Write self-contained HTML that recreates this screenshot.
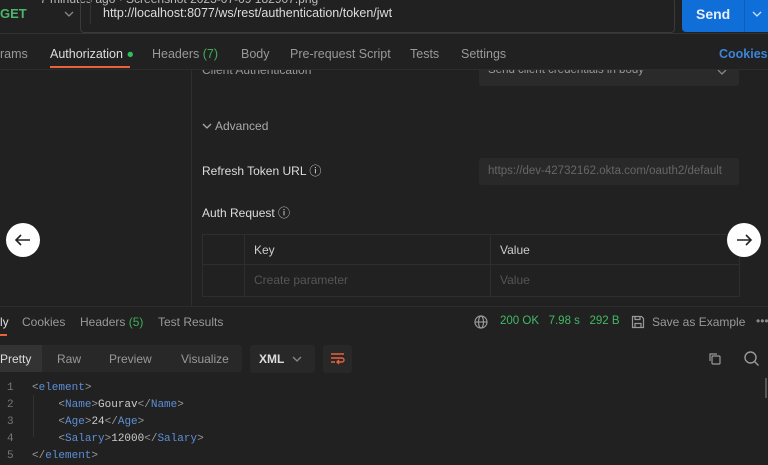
<!DOCTYPE html><html><head><style>
body{margin:0;width:768px;height:465px;background:#212121;font-family:"Liberation Sans",sans-serif;color:#ccc;position:relative;overflow:hidden;font-size:12px}
.a{position:absolute;white-space:nowrap}
.m{font-family:"Liberation Mono",monospace;font-size:11px}
.t{color:#5d8fd6}.p{color:#999}
</style></head><body>
<div class="a" style="left:40px;top:-8px;font-size:12px;color:#bbb">7 minutes ago · Screenshot 2023-07-09 182907.png</div>
<div class="a" style="left:0;top:6px;color:#4cb56a;font-weight:bold;font-size:13px">GET</div>
<svg class="a" style="left:64px;top:10px" width="10" height="8"><path d="M1 2l4 4 4-4" stroke="#888" fill="none" stroke-width="1.3"/></svg>
<div class="a" style="left:80px;top:-2px;width:593px;height:33px;border:1px solid #3a3a3a;border-radius:4px"></div>
<div class="a" style="left:90px;top:0;width:1px;height:24px;background:#333"></div>
<div class="a" style="left:103px;top:6px;color:#ddd;font-size:12.5px">http://localhost:8077/ws/rest/authentication/token/jwt</div>
<div class="a" style="left:682px;top:-3px;width:90px;height:35px;background:#0f6ed8;border-radius:4px"></div>
<div class="a" style="left:744px;top:0;width:1px;height:32px;background:#0a5fbf"></div>
<div class="a" style="left:696px;top:6px;color:#e6eefa;font-weight:bold;font-size:14px">Send</div>
<svg class="a" style="left:752px;top:10px" width="10" height="8"><path d="M1 2l4 4 4-4" stroke="#cfe0f7" fill="none" stroke-width="1.3"/></svg>
<div class="a" style="left:0;top:33px;width:768px;height:1px;background:#333"></div>
<div class="a" style="left:0;top:70px;width:768px;height:236px;overflow:hidden">
 <div class="a" style="left:191px;top:0;width:1px;height:236px;background:#2e2e2e"></div>
 <div class="a" style="left:479px;top:-8px;width:260px;height:24px;background:#2a2a2a;border-radius:3px"></div>
 <div class="a" style="left:488px;top:-6px;font-size:11.5px;color:#999">Send client credentials in body</div>
 <svg class="a" style="left:717px;top:-2px" width="10" height="8"><path d="M1 2l4 4 4-4" stroke="#888" fill="none" stroke-width="1.3"/></svg>
 <div class="a" style="left:202px;top:-7px;font-size:12px;color:#999">Client Authentication</div>
 <svg class="a" style="left:202px;top:52px" width="10" height="8"><path d="M1 2l4 4 4-4" stroke="#aaa" fill="none" stroke-width="1.3"/></svg>
 <div class="a" style="left:215px;top:49px;font-size:12px;color:#aaa">Advanced</div>
 <div class="a" style="left:202px;top:92px;font-size:12px;color:#ddd">Refresh Token URL ⓘ</div>
 <div class="a" style="left:479px;top:88px;width:260px;height:27px;background:#292929;border-radius:3px"></div>
 <div class="a" style="left:488px;top:95px;font-size:11.5px;color:#666;width:247px;overflow:hidden">https://dev-42732162.okta.com/oauth2/default</div>
 <div class="a" style="left:202px;top:134px;font-size:12px;color:#ddd">Auth Request ⓘ</div>
 <div class="a" style="left:202px;top:164px;width:536px;height:61px;border:1px solid #2e2e2e"></div>
 <div class="a" style="left:244px;top:164px;width:1px;height:62px;background:#2e2e2e"></div>
 <div class="a" style="left:490px;top:164px;width:1px;height:62px;background:#2e2e2e"></div>
 <div class="a" style="left:203px;top:194px;width:536px;height:1px;background:#2e2e2e"></div>
 <div class="a" style="left:254px;top:173px;font-size:12px;color:#ccc">Key</div>
 <div class="a" style="left:500px;top:173px;font-size:12px;color:#ccc">Value</div>
 <div class="a" style="left:254px;top:203px;font-size:12px;color:#555">Create parameter</div>
 <div class="a" style="left:500px;top:203px;font-size:12px;color:#555">Value</div>
</div>
<div class="a" style="left:0;top:34px;width:768px;height:35px;background:#212121"></div>
<div class="a" style="left:0;top:47px;font-size:12.5px;color:#999">rams</div>
<div class="a" style="left:50px;top:47px;font-size:12.5px;color:#ddd">Authorization <span style="color:#2ebd5a">●</span></div>
<div class="a" style="left:50px;top:66px;width:80px;height:2px;background:#e8623a"></div>
<div class="a" style="left:152px;top:47px;font-size:12.5px;color:#999">Headers <span style="color:#3fae5a">(7)</span></div>
<div class="a" style="left:241px;top:47px;font-size:12.5px;color:#999">Body</div>
<div class="a" style="left:290px;top:47px;font-size:12.5px;color:#999">Pre-request Script</div>
<div class="a" style="left:410px;top:47px;font-size:12.5px;color:#999">Tests</div>
<div class="a" style="left:461px;top:47px;font-size:12.5px;color:#999">Settings</div>
<div class="a" style="left:719px;top:47px;font-size:12.5px;color:#3d83d9;font-weight:bold">Cookies</div>
<div class="a" style="left:0;top:69px;width:768px;height:1px;background:#2c2c2c"></div>
<svg class="a" style="left:6px;top:223px" width="34" height="34"><circle cx="17" cy="17" r="17" fill="#fff"/><path d="M24 17H10M15 12l-5 5 5 5" stroke="#222" stroke-width="1.6" fill="none"/></svg>
<svg class="a" style="left:727px;top:223px" width="34" height="34"><circle cx="17" cy="17" r="17" fill="#fff"/><path d="M10 17h14M19 12l5 5-5 5" stroke="#222" stroke-width="1.6" fill="none"/></svg>
<div class="a" style="left:0;top:306px;width:768px;height:1px;background:#2c2c2c"></div>
<div class="a" style="left:0;top:315px;font-size:12px;color:#ddd">ly</div>
<div class="a" style="left:0;top:334px;width:7px;height:2px;background:#e8623a"></div>
<div class="a" style="left:22px;top:315px;font-size:12px;color:#999">Cookies</div>
<div class="a" style="left:80px;top:315px;font-size:12px;color:#999">Headers <span style="color:#3fae5a">(5)</span></div>
<div class="a" style="left:158px;top:315px;font-size:12px;color:#999">Test Results</div>
<svg class="a" style="left:474px;top:315px" width="14" height="14"><g stroke="#999" fill="none" stroke-width="1.2"><circle cx="7" cy="7" r="6"/><ellipse cx="7" cy="7" rx="2.5" ry="6"/><path d="M1 7h12"/></g></svg>
<div class="a" style="left:500px;top:315px;font-size:11.5px;color:#43b864">200 OK&nbsp;&nbsp;&nbsp;7.98 s&nbsp;&nbsp;&nbsp;292 B</div>
<svg class="a" style="left:631px;top:315px" width="14" height="14"><g stroke="#999" fill="none" stroke-width="1.2"><path d="M1.5 1.5h9l2 2v9h-11z"/><path d="M4 1.5v3h5v-3M4 12.5v-4h6v4"/></g></svg>
<div class="a" style="left:652px;top:315px;font-size:12px;color:#999">Save as Example</div>
<div class="a" style="left:756px;top:314px;font-size:12px;color:#888">•••</div>
<div class="a" style="left:0;top:345px;width:242px;height:27px;background:#282828;border-radius:3px"></div>
<div class="a" style="left:0;top:345px;width:42px;height:27px;background:#333"></div>
<div class="a" style="left:0;top:352px;font-size:12px;color:#ddd">Pretty</div>
<div class="a" style="left:57px;top:352px;font-size:12px;color:#999">Raw</div>
<div class="a" style="left:109px;top:352px;font-size:12px;color:#999">Preview</div>
<div class="a" style="left:181px;top:352px;font-size:12px;color:#999">Visualize</div>
<div class="a" style="left:250px;top:345px;width:65px;height:28px;background:#282828;border-radius:3px"></div>
<div class="a" style="left:259px;top:352px;font-size:12px;color:#ddd;font-weight:bold">XML</div>
<svg class="a" style="left:292px;top:355px" width="10" height="8"><path d="M1 2l4 4 4-4" stroke="#888" fill="none" stroke-width="1.3"/></svg>
<div class="a" style="left:323px;top:345px;width:29px;height:28px;background:#282828;border-radius:3px"></div>
<svg class="a" style="left:330px;top:352px" width="16" height="14"><g stroke="#e8623a" fill="none" stroke-width="1.4"><path d="M1 2h13M1 6h11a2 2 0 0 1 0 4H8M1 10h4M9 8l-2 2 2 2"/></g></svg>
<svg class="a" style="left:707px;top:351px" width="16" height="16"><g stroke="#999" fill="none" stroke-width="1.2"><rect x="5" y="5" width="8" height="8" rx="1"/><path d="M3 10V3h7"/></g></svg>
<svg class="a" style="left:743px;top:350px" width="18" height="18"><g stroke="#999" fill="none" stroke-width="1.4"><circle cx="7.5" cy="7.5" r="5.5"/><path d="M11.5 11.5l4 4"/></g></svg>
<div class="a" style="left:765px;top:378px;width:2px;height:20px;background:#555"></div>
<div class="a m" style="left:7px;top:380px;color:#777;line-height:17px">1<br>2<br>3<br>4<br>5</div>
<div class="a" style="left:33px;top:395px;width:1px;height:42px;background:#333"></div>
<div class="a m" style="left:32px;top:380px;line-height:17px;color:#ccc"><span class="p">&lt;</span><span class="t">element</span><span class="p">&gt;</span><br>&nbsp;&nbsp;&nbsp;&nbsp;<span class="p">&lt;</span><span class="t">Name</span><span class="p">&gt;</span>Gourav<span class="p">&lt;/</span><span class="t">Name</span><span class="p">&gt;</span><br>&nbsp;&nbsp;&nbsp;&nbsp;<span class="p">&lt;</span><span class="t">Age</span><span class="p">&gt;</span>24<span class="p">&lt;/</span><span class="t">Age</span><span class="p">&gt;</span><br>&nbsp;&nbsp;&nbsp;&nbsp;<span class="p">&lt;</span><span class="t">Salary</span><span class="p">&gt;</span>12000<span class="p">&lt;/</span><span class="t">Salary</span><span class="p">&gt;</span><br><span class="p">&lt;/</span><span class="t">element</span><span class="p">&gt;</span></div>
</body></html>
